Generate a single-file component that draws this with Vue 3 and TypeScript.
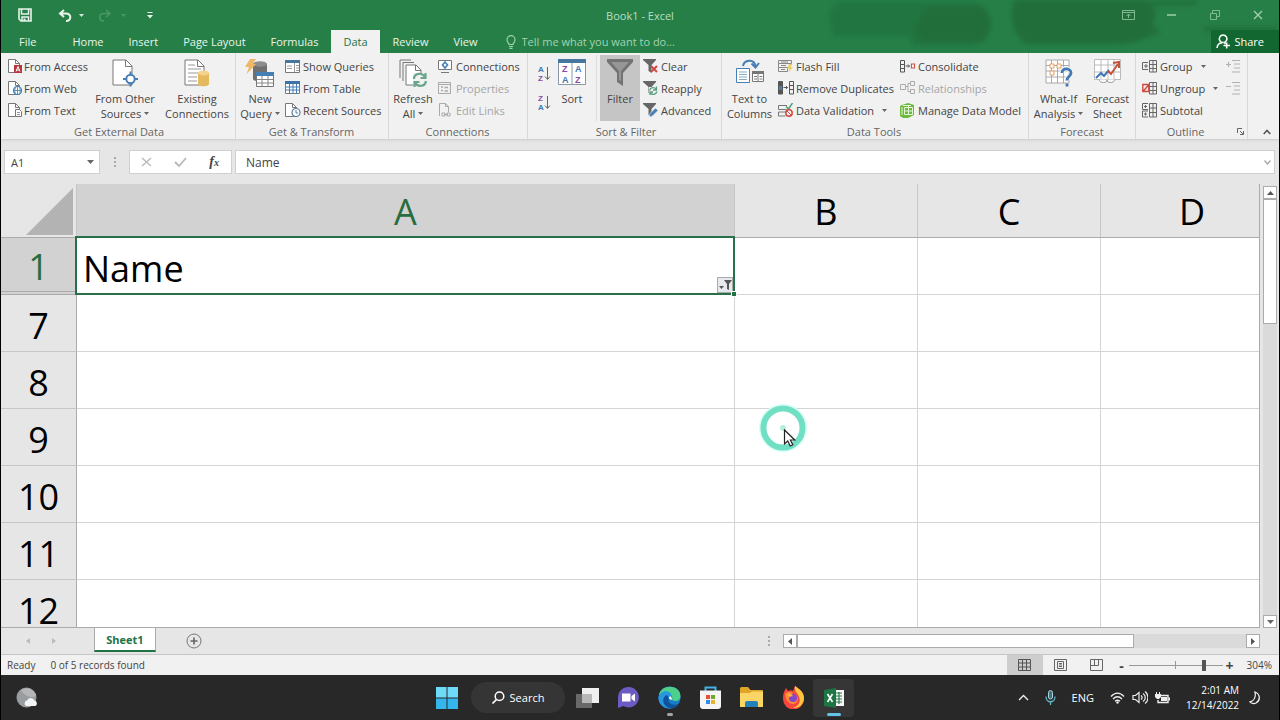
<script setup lang="ts">
import { h, ref } from 'vue'

interface Glyph { w: number; h: number; body: string }

const page = '<path d="M.5.5h7l4 4v9H.5z" fill="#fff" stroke="#777"/><path d="M7.500.5v4h4" fill="none" stroke="#777"/>'
const bigPage = '<path d="M1 1h13l6 6v19H1z" fill="#fff" stroke="#777"/><path d="M13.500 1v6.500H20" fill="none" stroke="#777"/>'
const funnel = '<path d="M0 0h13v1L8.500 6v8l-3-2V6L0 1z" fill="#666"/>'
const table = '<path d="M.5.5h14v12H.5z" fill="#fff" stroke="#777"/>'
const letter = (x: number, y: number, s: number, c: string, t: string) =>
  `<text x="${x}" y="${y}" font-size="${s}" font-weight="700" font-family="Liberation Sans, sans-serif" fill="${c}">${t}</text>`
const blue = '#3f76b5'
const purple = '#8a4ba8'

const glyphs: Record<string, Glyph> = {
  save: { w: 14, h: 14, body: '<path d="M1 1h12v12H3l-2-2z" fill="none" stroke="#e9f5ec" stroke-width="1.600"/><path d="M3.500 1v5h7V1M4 13V9h6.500v4" fill="none" stroke="#e9f5ec" stroke-width="1.500"/><path d="M5.500 10.500h2V13h-2z" fill="#e9f5ec"/>' },
  undo: { w: 14, h: 13, body: '<path d="M6 1 2 4.500 6 8M2.500 4.500H8c6 0 5.500 7.500 0 7.500" fill="none" stroke="#e9f5ec" stroke-width="2"/>' },
  redo: { w: 14, h: 13, body: '<path d="m8 1 4 3.500L8 8M11.500 4.500H6c-6 0-5.500 7.500 0 7.500" fill="none" stroke="#4a9965" stroke-width="1.600"/>' },
  caretLight: { w: 5, h: 3, body: '<path d="M0 0h5L2.500 3z" fill="#d3ead9"/>' },
  caretDim: { w: 5, h: 3, body: '<path d="M0 0h5L2.500 3z" fill="#4a9965"/>' },
  customize: { w: 6, h: 7, body: '<path d="M.5 0h5v1h-5zM0 3h6L3 6.500z" fill="#e9f5ec"/>' },
  ribbonMode: { w: 13, h: 10, body: '<path d="M.5.5h12v9H.5zM.5 2.500h12M6.500 8V4M4.500 6l2-2 2 2" fill="none" stroke="#7ebb90"/>' },
  minimize: { w: 9, h: 2, body: '<path d="M0 0h9v2H0z" fill="#7ebb90"/>' },
  restore: { w: 10, h: 10, body: '<path d="M.5 3.500h6v6h-6zM2.500 3V.500h7v6h-2.500" fill="none" stroke="#7ebb90"/>' },
  close: { w: 10, h: 10, body: '<path d="m1 1 8 8M9 1 1 9" fill="none" stroke="#a5d0b1" stroke-width="1.300"/>' },
  bulb: { w: 10, h: 14, body: '<path d="M3 9.500C3 8 1 7.500 1 4.700a4 4 0 0 1 8 0C9 7.500 7 8 7 9.500zM3 11.500h4M3.500 13.300h3" fill="none" stroke="#9fd2ae" stroke-width="1.200"/>' },
  person: { w: 14, h: 15, body: '<path d="M7 8.500a3.800 3.800 0 1 1 .2 0M1 14c.3-3 2.500-5 5-5.200M8.500 8.500l1 1.500M7.500 11.500H14M10.700 8.500v6" fill="none" stroke="#fff" stroke-width="1.500"/>' },
  access: { w: 14, h: 14, body: page + '<path d="M6 6h8v8H6z" fill="#b5363f"/><path d="m8 12.500 2-5 2 5M8.700 11h2.600" fill="none" stroke="#fff"/>' },
  web: { w: 14, h: 14, body: page + '<circle cx="9.500" cy="9.500" r="4" fill="#fff" stroke="#3c7fb5" stroke-width="1.200"/><path d="M5.500 9.500h8M9.500 5.500v8M7.500 6.500c-1 2-1 4 0 6M11.500 6.500c1 2 1 4 0 6" fill="none" stroke="#3c7fb5" stroke-width=".8"/>' },
  text: { w: 14, h: 14, body: page + '<path d="M7.500 6.500h4l2 2v5h-6z" fill="#fff" stroke="#777"/><path d="M9 9.500h3M9 11.500h3" stroke="#999"/>' },
  otherSources: { w: 26, h: 28, body: bigPage + '<circle cx="18.500" cy="20" r="4.200" fill="#fff" stroke="#477fb5" stroke-width="2"/><path d="M18.500 12.500v4M18.500 23.500v4M11 20h4M22 20h4" stroke="#477fb5" stroke-width="2"/>' },
  existing: { w: 26, h: 28, body: bigPage + '<path d="M4 6h7M4 10h13M4 14h11M4 18h9M4 22h9" stroke="#999"/><path d="M14 14v11c0 3 11 3 11 0V14z" fill="#e5b95e"/><ellipse cx="19.500" cy="14" rx="5.500" ry="2.500" fill="#f4d38c"/>' },
  newQuery: { w: 30, h: 30, body: '<path d="M8 5v15c0 3 14 3 14 0V5z" fill="#707070"/><ellipse cx="15" cy="5" rx="7" ry="2.800" fill="#8d8d8d"/><path d="M5 0h6L7.500 5H11L1.500 15 4 8H0z" fill="#efb765"/><path d="M11.500 13.500h17v14h-17z" fill="#fff" stroke="#777"/><path d="M11 13h18v4H11z" fill="#477fb5"/><path d="M17 17v10M23 17v10M12 20.500h16M12 24h16" stroke="#888"/>' },
  showQueries: { w: 15, h: 13, body: table + '<path d="M0 0h15v3H0z" fill="#47779f"/><path d="M9.500 3v9M2 6h5M2 8.500h5M11 5.500h3M11 8h3M11 10.500h3" stroke="#999"/>' },
  fromTable: { w: 15, h: 14, body: table + '<path d="M0 0h15v3H0z" fill="#3f73a8"/><path d="M4.500 3v10M8 3v10M11.500 3v10M1 6h13M1 9h13" stroke="#477fb5"/>' },
  recent: { w: 16, h: 14, body: page + '<circle cx="11" cy="9.500" r="4" fill="#fff" stroke="#567b9c" stroke-width="1.200"/><path d="M11 7v3h2" fill="none" stroke="#567b9c"/>' },
  refresh: { w: 28, h: 28, body: '<path d="M1 19V1h11" fill="none" stroke="#777"/><path d="M4 22V3.500h11" fill="none" stroke="#777"/><path d="M7 6h10l5 5v15H7z" fill="#fff" stroke="#777"/><path d="M16.500 6v5.500H22" fill="none" stroke="#777"/><path d="M14 14h14v14H14z" fill="#f1f1f1"/><path d="M15 20c0-6 8-7 11-2M26.500 14v5h-5M27 22c-1 6-8 6-11 2M15.500 28v-5h5" fill="none" stroke="#68a58a" stroke-width="2.200"/>' },
  connections: { w: 14, h: 13, body: '<path d="M.5.5h13v9H.5zM3 12.500h8" fill="#fff" stroke="#777"/><path d="m7 2 2.500 3L7 8 4.500 5z" fill="none" stroke="#477fb5" stroke-width="1.600"/>' },
  properties: { w: 13, h: 12, body: '<path d="M.5.5h12v11H.5zM.5 2.500h12" fill="none" stroke="#aaa"/><path d="M3 5h2M3 8.500h2M6.500 5.500H10M6.500 9H10" stroke="#aaa" stroke-width="1.500"/>' },
  links: { w: 13, h: 14, body: '<path d="M1.500 13V.500h6l3 3V9M7.500.5v3h3" fill="none" stroke="#aaa"/><path d="M4 10h3v3H4zM9 10h3v3H9zM6 11.500h4" fill="none" stroke="#aaa"/>' },
  sortAsc: { w: 15, h: 19, body: letter(1, 8, 8, blue, 'A') + letter(1, 17, 8, purple, 'Z') + '<path d="M10.500 3v12M8 12.500l2.500 3 2.500-3" fill="none" stroke="#666"/>' },
  sortDesc: { w: 15, h: 19, body: letter(1, 8, 8, purple, 'Z') + letter(1, 17, 8, blue, 'A') + '<path d="M10.500 3v12M8 12.500l2.500 3 2.500-3" fill="none" stroke="#666"/>' },
  sort: { w: 28, h: 27, body: '<path d="M.5.5h27v25H.5z" fill="#fff" stroke="#8a98a5"/><path d="M0 0h28v4H0z" fill="#47779f"/><path d="M14 4v21" stroke="#8a98a5"/>' + letter(4, 13, 9, purple, 'Z') + letter(4, 24, 9, blue, 'A') + letter(17, 13, 9, blue, 'A') + letter(17, 24, 9, purple, 'Z') },
  filter: { w: 26, h: 28, body: '<path d="M0 0h26v3L16 14v13l-6-4v-9L0 3z" fill="#737373"/><path d="M4 3h18l-8 9v10l-2-1v-9z" fill="#969696"/>' },
  clear: { w: 15, h: 14, body: funnel + '<path d="m8 7 6 6M14 7l-6 6" stroke="#cf4a42" stroke-width="2"/>' },
  reapply: { w: 15, h: 14, body: funnel + '<path d="M6 6h9v8H6z" fill="#f1f1f1"/><path d="M6.500 9.500c1-3.500 5-3.500 6.500-1.500M13.500 5.500V9H10M14 10.500c-1 3.500-5 3.500-6.500 1.500M7 14v-3h3" fill="none" stroke="#58a183" stroke-width="1.300"/>' },
  advanced: { w: 15, h: 14, body: funnel + '<path d="m6 14 1-3.500L12.500 5 15 7.500 9.500 13z" fill="#477fb5" stroke="#f1f1f1" stroke-width=".6"/>' },
  textCols: { w: 30, h: 26, body: '<path d="M1.500 9.500h13v14h-13z" fill="#fff" stroke="#477fb5"/><path d="M4 13h8M4 15.500h8M4 18h8M4 20.500h8" stroke="#8ba7be"/><path d="M17.500 12.500h11v10h-11z" fill="#fff" stroke="#777"/><path d="M17 12h12v3H17z" fill="#777"/><path d="M23 15v8M19 17.500h3M24.500 17.500h3M19 20h3M24.500 20h3" stroke="#777"/><path d="M8 7C9 1 19-1 20.500 7M16.500 4.500l4 4 3.500-4.500" fill="none" stroke="#477fb5" stroke-width="2"/>' },
  flash: { w: 15, h: 13, body: '<path d="M.5.5h13v3H.5zM.5 3.500h11v4H.5zM.5 7.500h9v4H.5zM3 2h7M3 5.500h5M3 9.500h4" fill="none" stroke="#888"/><path d="M11 4h3.500L12.500 7H15l-5 6 1.500-4H9z" fill="#e9cf6a"/>' },
  dupes: { w: 16, h: 14, body: '<path d="M.5.5h4v12.500h-4z" fill="#fff" stroke="#555"/><path d="M1 1h3v4H1zM1 9h3v4H1z" fill="#555"/><path d="M1 5h3v4H1z" fill="#477fb5"/><path d="M5.500 6.500h4M8 5l1.500 1.500L8 8M11.500.5h4v12.500h-4zM11.500 4.500h4M11.500 8.500h4" fill="none" stroke="#555"/>' },
  validation: { w: 15, h: 14, body: '<path d="M9 2.500H.5v4h8M8 9H.5v4h7" fill="none" stroke="#777"/><path d="m8 3.500 2.500 2.500 4-6" fill="none" stroke="#4d9d78" stroke-width="1.500"/><circle cx="11" cy="10" r="3.200" fill="none" stroke="#cf4a42" stroke-width="1.500"/><path d="m9 8 4 4" stroke="#cf4a42"/>' },
  consolidate: { w: 16, h: 13, body: '<path d="M.5.500h4v11.500h-4zM.5 4.500h4M.5 8.500h4M5.500 6h4M8 4.500 9.500 6 8 7.500" fill="none" stroke="#555"/><path d="M11.500 4h3v4h-3z" fill="#fff" stroke="#c3574d" stroke-width="1.200"/>' },
  relations: { w: 16, h: 14, body: '<path d="M.5 3.500h5v5h-5zM10.500.5h4v4h-4zM10.500 8.500h4v4h-4zM6 5.500h2V2.500h2M8 5.500v5h2" fill="none" stroke="#aaa"/>' },
  model: { w: 15, h: 15, body: '<path d="M2 2 8 0l6 2v10l-6 3H3L0 13V3z" fill="#6cb93c"/><path d="M4.500 4.500h8v7h-8zM8.500 2v9M4.500 8h8M2 4v8M3 2.500h8" fill="none" stroke="#e4f8d6"/>' },
  whatIf: { w: 28, h: 28, body: '<path d="M1 1h23v23H1zM1 6.500h23M1 12h23M1 18h23M6.500 1v23M12.500 1v23M18.500 1v23" fill="#fff" stroke="#aaa"/><path d="M5 5h4v4H5zM5 12h4v4H5zM12 5h4v4h-4z" fill="#fff" stroke="#e2a064"/><path d="M17 14c0-6 9-5 9 0 0 3.500-4 3-4 7.500" fill="none" stroke="#f1f1f1" stroke-width="5"/><path d="M17 14c0-6 9-5 9 0 0 3.500-4 3-4 7.500M22 24.500v3" fill="none" stroke="#4379b3" stroke-width="2.800"/>' },
  forecast: { w: 27, h: 26, body: '<path d="M.5.5h26v20H.5zM.5 6h26M.5 13h26M7 1v19M14 1v19M20 1v19" fill="#fff" stroke="#bbb"/><path d="m2 19 5-5 3 3 5-6" fill="none" stroke="#3f76b5" stroke-width="2"/><path d="m14 12 3 3 7-10M19 4l6-1v6" fill="none" stroke="#c5533c" stroke-width="2"/><path d="M5 20.500c1 4 8 4 9 0M12 20.500c1 4 8 4 9 0" fill="#fff" stroke="#999"/>' },
  group: { w: 15, h: 13, body: '<path d="M6 2.500H.5v7H6M4 4v4M2 6h4M7.500.5h7v11.500h-7zM7.500 4.500h7M7.500 8.500h7M11 .500v11.500" fill="none" stroke="#666"/>' },
  ungroup: { w: 15, h: 13, body: '<path d="M7.500.5h7v11.500h-7zM7.500 4.500h7M7.500 8.500h7M11 .500v11.500" fill="none" stroke="#666"/><path d="M.8 2.500h6v7h-6zM1 9.500l6-7" fill="none" stroke="#cf4a42" stroke-width="1.400"/>' },
  subtotal: { w: 15, h: 15, body: '<path d="M6 .5H.5v6H6M6 8H.5v6H6M2 3.500h3M3.500 2v3M2 11h3M3.500 9.500v3M7.500.5h7v13.500h-7zM7.500 5h7M7.500 9.500h7M11 .500V14" fill="none" stroke="#666"/>' },
  showDetail: { w: 14, h: 13, body: '<path d="M0 4.500h5M2.500 2v5M6 .5h8M8 4h6M8 8h6M6 12h8" fill="none" stroke="#b2b2b2" stroke-width="1.200"/>' },
  hideDetail: { w: 14, h: 13, body: '<path d="M0 4.500h5M6 .5h8M8 4h6M8 8h6M6 12h8" fill="none" stroke="#b2b2b2" stroke-width="1.200"/>' },
  caret: { w: 5, h: 3, body: '<path d="M0 0h5L2.500 3z" fill="#666"/>' },
  launcher: { w: 7, h: 7, body: '<path d="M.5 5V.500H5M3 3l3 3M6.500 3v3.500H3" fill="none" stroke="#666"/>' },
  collapse: { w: 8, h: 6, body: '<path d="m.7 5 3.300-3.500L7.300 5" fill="none" stroke="#555" stroke-width="1.600"/>' },
  expand: { w: 7, h: 5, body: '<path d="M.5.500 3.500 4l3-3.500" fill="none" stroke="#aaa" stroke-width="1.400"/>' },
  cancel: { w: 11, h: 10, body: '<path d="m1 1 9 8M10 1 1 9" stroke="#b9b9b9" stroke-width="1.400"/>' },
  accept: { w: 13, h: 10, body: '<path d="m1 5 4 4 7-8" fill="none" stroke="#b9b9b9" stroke-width="1.800"/>' },
  cellFilter: { w: 13, h: 10, body: '<path d="M0 6h5L2.500 9zM5 0h8L10 4v6L8 9V4z" fill="#555"/>' },
  up: { w: 7, h: 4, body: '<path d="M0 4h7L3.500 0z" fill="#555"/>' },
  down: { w: 7, h: 4, body: '<path d="M0 0h7L3.500 4z" fill="#666"/>' },
  left: { w: 4, h: 7, body: '<path d="M4 0v7L0 3.500z" fill="#555"/>' },
  right: { w: 4, h: 7, body: '<path d="M0 0v7l4-3.500z" fill="#555"/>' },
  prevSheet: { w: 4, h: 6, body: '<path d="M4 0v6L0 3z" fill="#bbb"/>' },
  nextSheet: { w: 4, h: 6, body: '<path d="M0 0v6l4-3z" fill="#bbb"/>' },
  addSheet: { w: 16, h: 16, body: '<circle cx="8" cy="8" r="7" fill="none" stroke="#777"/><path d="M8 4.500v7M4.500 8h7" stroke="#666" stroke-width="1.600"/>' },
  normalView: { w: 13, h: 12, body: '<path d="M.5.5h12v11H.500zM.5 4h12M.5 8h12M4.500.5v11M8.500.5v11" fill="none" stroke="#555"/>' },
  layoutView: { w: 13, h: 12, body: '<path d="M.5.5h12v11H.500zM3.500 2.500h6v7h-6zM5 4.500h3M5 6h3M5 7.500h3" fill="none" stroke="#666"/>' },
  breakView: { w: 13, h: 12, body: '<path d="M.5.5h12v11H.500zM4.500.5v6M8.500.5v6M.500 6.500h8" fill="none" stroke="#666"/>' },
  weather: { w: 23, h: 22, body: '<circle cx="10.500" cy="10.500" r="10" fill="#9a9d9f"/><path d="M5 3a10 10 0 0 1 11 0 9 9 0 0 1 4 6C15 11 9 10 5 3z" fill="#b4b6b7"/><path d="M10 19a3 3 0 0 1 1-5.500 4 4 0 0 1 7.500 0 3 3 0 0 1 1 5.500z" fill="#f1f3f4"/>' },
  windows: { w: 22, h: 22, body: '<path d="M0 0h10.500v10.500H0zM11.500 0H22v10.500H11.500z" fill="#6edaf8"/><path d="M0 11.500h10.500V22H0zM11.500 11.500H22V22H11.500z" fill="#35b5ee"/>' },
  search: { w: 13, h: 13, body: '<circle cx="7.500" cy="5.300" r="4.300" fill="none" stroke="#fff" stroke-width="1.500"/><path d="m4.500 8.500-4 4" stroke="#fff" stroke-width="1.700"/>' },
  taskView: { w: 23, h: 20, body: '<path d="M0 6h16v14H0z" fill="#696969"/><path d="M6 0h17v15H6z" fill="#f0f0f0"/><path d="M6 6h10v9H6z" fill="#b8b8b8"/>' },
  chat: { w: 21, h: 21, body: '<path d="M10.500 0a10.200 10.200 0 1 1-5 19L0 21V10A10.200 10.200 0 0 1 10.500 0z" fill="#6d5bc4"/><path d="M4 6.500h8.500v8H4zM13.500 9l3.500-2.500v8L13.500 12z" fill="#fff"/>' },
  edge: { w: 23, h: 23, body: '<circle cx="11.500" cy="11.500" r="11" fill="#187ec8"/><path d="M1 9C3-2 22-2 22.500 10c0 5-5 6-8.500 4 2-5-6-9-13-5z" fill="#4ed08c"/><path d="M.500 11C4 2 14 5 13.500 10c-3-1-6 4-2 8 3 3 7 2 9 0C14 26 0 23 .5 11z" fill="#2698df"/><path d="M9 9c-6 2-5 12 4 13.500 3 0 6-2 7.500-4.500C14 20 9 17 11 12z" fill="#10529b"/><path d="M11 11c2-2 3 1 3 3-2-1-4-1-3-3z" fill="#e8f7fd"/>' },
  store: { w: 21, h: 23, body: '<path d="M5.500 6V1.500h10V6" fill="none" stroke="#43b2e6" stroke-width="2"/><path d="M0 4.500h21V20a3 3 0 0 1-3 3H3a3 3 0 0 1-3-3z" fill="#f5f5f5"/><path d="M6 9h4v4H6z" fill="#e75235"/><path d="M11 9h4v4h-4z" fill="#71a92f"/><path d="M6 14h4v4H6z" fill="#2f8fe0"/><path d="M11 14h4v4h-4z" fill="#eeb02f"/>' },
  explorer: { w: 23, h: 21, body: '<path d="M0 1.500A1.500 1.500 0 0 1 1.500 0H8l2.500 3H22a1 1 0 0 1 1 1v16H0z" fill="#dea526"/><path d="M0 6h10l2-1.500h11V20H0z" fill="#fbd667"/><path d="M5 20v-4a2 2 0 0 1 2-2h9a2 2 0 0 1 2 2v4z" fill="#2382b9"/>' },
  firefox: { w: 22, h: 23, body: '<path d="M2 6 4 2l2 3c2-1 4-1 5 0l2-5c6 4 9 7 9 13a10.500 10.500 0 0 1-21 0c0-3 .3-5 1-7z" fill="#f5473f"/><path d="M13 0c6 4 9 7 9 13-1 7-6 9-11 9 6-2 8-7 6-11-1-4-5-5-4-11z" fill="#ffc53d"/><path d="M3 8c3-3 6-2 8-1l-2 2c6-1 9 4 5 8-5 3-10-1-11-9z" fill="#fb8b34"/><circle cx="11" cy="12" r="4" fill="#8446ca"/><path d="M5 8c4-1 5 1 6 2l-4 1z" fill="#ffb13c"/>' },
  excel: { w: 20, h: 20, body: '<path d="M10 2h10v16H10z" fill="#f6f6f6"/><path d="M12 5h6M12 8h6M12 11h6M12 14h6M15 4v12" stroke="#287c47" stroke-width="1.200"/><path d="M0 2 12 0v20L0 18z" fill="#1e7544"/><path d="m3.500 6 5 8M8.500 6l-5 8" stroke="#fff" stroke-width="1.600"/>' },
  tray: { w: 11, h: 7, body: '<path d="m1 6 4.500-4.500L10 6" fill="none" stroke="#eee" stroke-width="1.400"/>' },
  mic: { w: 11, h: 15, body: '<rect x="3.500" y=".6" width="4" height="8.400" rx="2" fill="#4a6c75" stroke="#a9d6df"/><path d="M1 6.500c0 7 9 7 9 0M5.500 12v3" fill="none" stroke="#62b7c7" stroke-width="1.300"/>' },
  wifi: { w: 15, h: 12, body: '<path d="M1 4.500c4-4.500 9-4.500 13 0M3 7c3-3 6-3 9 0M5 9.300c2-1.700 3-1.700 5 0" fill="none" stroke="#eee" stroke-width="1.300"/><circle cx="7.500" cy="10.500" r="1.200" fill="#eee"/>' },
  volume: { w: 16, h: 13, body: '<path d="M1 4.500h2.500L7 1.500v10l-3.500-3H1zM9 4.500c1.500 1 1.500 3 0 4M11 2.500c3 2 3 6 0 8M13 .500c4 3 4 9 0 12" fill="none" stroke="#eee" stroke-width="1.200"/>' },
  battery: { w: 15, h: 12, body: '<path d="M5 3.500h8v7H3V8M14.500 5.500v3" fill="none" stroke="#eee" stroke-width="1.400"/><path d="M6 5h6v4H6zM0 2h6v3L4 7H2L0 5zM1 0h1v3H1zM4 0h1v3H4z" fill="#eee"/>' },
  moon: { w: 12, h: 14, body: '<path d="M6 1c5 2 6 8 1 11-2 1-5 .5-6-1 4-1 6-5 5-10z" fill="none" stroke="#eee" stroke-width="1.300"/>' },
}

const Icon = (props: { name: string }) => {
  const g = glyphs[props.name]
  return h('svg', { class: 'icon', width: g.w, height: g.h, viewBox: `0 0 ${g.w} ${g.h}`, 'aria-hidden': 'true', innerHTML: g.body })
}
Icon.props = ['name']

interface Small { icon: string; label: string; off?: boolean; menu?: boolean }
const external: Small[] = [{ icon: 'access', label: 'From Access' }, { icon: 'web', label: 'From Web' }, { icon: 'text', label: 'From Text' }]
const transform: Small[] = [{ icon: 'showQueries', label: 'Show Queries' }, { icon: 'fromTable', label: 'From Table' }, { icon: 'recent', label: 'Recent Sources' }]
const connections: Small[] = [{ icon: 'connections', label: 'Connections' }, { icon: 'properties', label: 'Properties', off: true }, { icon: 'links', label: 'Edit Links', off: true }]
const filters: Small[] = [{ icon: 'clear', label: 'Clear' }, { icon: 'reapply', label: 'Reapply' }, { icon: 'advanced', label: 'Advanced' }]
const toolsA: Small[] = [{ icon: 'flash', label: 'Flash Fill' }, { icon: 'dupes', label: 'Remove Duplicates' }, { icon: 'validation', label: 'Data Validation', menu: true }]
const toolsB: Small[] = [{ icon: 'consolidate', label: 'Consolidate' }, { icon: 'relations', label: 'Relationships', off: true }, { icon: 'model', label: 'Manage Data Model' }]
const outline: Small[] = [{ icon: 'group', label: 'Group', menu: true }, { icon: 'ungroup', label: 'Ungroup', menu: true }, { icon: 'subtotal', label: 'Subtotal' }]

const SmallList = (props: { items: Small[] }) =>
  h('div', { class: 'small-list' }, props.items.map((s) =>
    h('button', { class: 'small', type: 'button', disabled: s.off }, [
      h('span', { class: 'small-icon' }, [h(Icon, { name: s.icon })]),
      s.label,
      s.menu ? h('span', { class: 'small-caret' }, [h(Icon, { name: 'caret' })]) : null,
    ])))
SmallList.props = ['items']

const tabs = ['Home', 'Insert', 'Page Layout', 'Formulas', 'Data', 'Review', 'View']
const columns = ['A', 'B', 'C', 'D']
const rows = [1, 7, 8, 9, 10, 11, 12]
const apps = [
  { icon: 'taskView', label: 'Task view' }, { icon: 'chat', label: 'Chat' }, { icon: 'edge', label: 'Edge', running: true },
  { icon: 'store', label: 'Store' }, { icon: 'explorer', label: 'File Explorer' }, { icon: 'firefox', label: 'Firefox' },
  { icon: 'excel', label: 'Excel', active: true },
]
const cellRef = ref('A1')
const formula = ref('Name')
const ask = ref('')
const zoom = ref(304)
</script>

<template>
  <div class="app">
    <header class="top">
      <svg class="blotches" width="460" height="52" viewBox="0 0 460 52" aria-hidden="true">
        <defs><filter id="soften"><feGaussianBlur stdDeviation="2" /></filter></defs>
        <g filter="url(#soften)" fill="#206e3b">
          <path d="M18 2h140l10 8v30l-15 6H95L90 36H15L10 14z" opacity=".6" />
          <path d="M108 6h50q14 4 14 18t-14 18h-55l-8-12z" />
          <path d="M195 0h130q18 8 8 24l8 8-14 6q-10 6-30 6h-90q-20-16-12-44z" />
          <path d="M330 0h50l-6 6h-44zM385 26h74v6h-74z" opacity=".8" />
        </g>
      </svg>
      <div class="title-bar">
        <div class="quick">
          <button type="button" aria-label="Save"><Icon name="save" /></button>
          <button class="undo" type="button" aria-label="Undo"><Icon name="undo" /><Icon name="caretLight" /></button>
          <button class="redo" type="button" aria-label="Redo"><Icon name="redo" /><Icon name="caretDim" /></button>
          <button class="custom" type="button" aria-label="Customize toolbar"><Icon name="customize" /></button>
        </div>
        <span class="doc">Book1 - Excel</span>
        <div class="window-buttons">
          <button v-for="n in ['ribbonMode', 'minimize', 'restore', 'close']" :key="n" type="button" :aria-label="n"><Icon :name="n" /></button>
        </div>
      </div>
      <nav class="tabs">
        <button class="file" type="button">File</button>
        <button v-for="t in tabs" :key="t" type="button" :class="{ current: t === 'Data' }">{{ t }}</button>
        <label class="tell"><Icon name="bulb" /><input v-model="ask" type="text" placeholder="Tell me what you want to do..." aria-label="Tell me what you want to do"></label>
        <button class="share" type="button"><Icon name="person" />Share</button>
      </nav>
    </header>

    <div class="ribbon">
      <section class="group g-ext">
        <div class="tools">
          <SmallList class="c-ext" :items="external" />
          <button class="big w70" type="button"><span class="pic"><Icon name="otherSources" /></span><span>From Other</span><span class="line">Sources<Icon name="caret" /></span></button>
          <button class="big w70" type="button"><span class="pic"><Icon name="existing" /></span><span>Existing</span><span>Connections</span></button>
        </div>
        <h2>Get External Data</h2>
      </section>
      <section class="group g-trans">
        <div class="tools">
          <button class="big w40" type="button"><span class="pic"><Icon name="newQuery" /></span><span>New</span><span class="line">Query<Icon name="caret" /></span></button>
          <SmallList class="c-trans" :items="transform" />
        </div>
        <h2>Get &amp; Transform</h2>
      </section>
      <section class="group g-conn">
        <div class="tools">
          <button class="big w40" type="button"><span class="pic"><Icon name="refresh" /></span><span>Refresh</span><span class="line">All<Icon name="caret" /></span></button>
          <SmallList class="c-conn" :items="connections" />
        </div>
        <h2>Connections</h2>
      </section>
      <section class="group g-sort">
        <div class="tools">
          <div class="orders">
            <button type="button" aria-label="Sort A to Z"><Icon name="sortAsc" /></button>
            <button type="button" aria-label="Sort Z to A"><Icon name="sortDesc" /></button>
          </div>
          <button class="big w40" type="button"><span class="pic"><Icon name="sort" /></span><span>Sort</span></button>
          <span class="divider" />
          <button class="big w40 pressed" type="button" aria-pressed="true"><span class="pic"><Icon name="filter" /></span><span>Filter</span></button>
          <SmallList class="c-filter" :items="filters" />
        </div>
        <h2>Sort &amp; Filter</h2>
      </section>
      <section class="group g-tools">
        <div class="tools">
          <button class="big w48" type="button"><span class="pic"><Icon name="textCols" /></span><span>Text to</span><span>Columns</span></button>
          <SmallList class="c-tools" :items="toolsA" />
          <SmallList :items="toolsB" />
        </div>
        <h2>Data Tools</h2>
      </section>
      <section class="group g-fore">
        <div class="tools">
          <button class="big w48" type="button"><span class="pic"><Icon name="whatIf" /></span><span>What-If</span><span class="line">Analysis<Icon name="caret" /></span></button>
          <button class="big w48" type="button"><span class="pic"><Icon name="forecast" /></span><span>Forecast</span><span>Sheet</span></button>
        </div>
        <h2>Forecast</h2>
      </section>
      <section class="group g-out">
        <div class="tools">
          <SmallList :items="outline" />
          <div class="details">
            <button type="button" aria-label="Show detail"><Icon name="showDetail" /></button>
            <button type="button" aria-label="Hide detail"><Icon name="hideDetail" /></button>
          </div>
        </div>
        <div class="caption"><h2>Outline</h2><button type="button" aria-label="Outline settings"><Icon name="launcher" /></button></div>
      </section>
      <div class="fold"><button type="button" aria-label="Collapse the ribbon"><Icon name="collapse" /></button></div>
    </div>

    <div class="formula-row">
      <div class="name-box"><input v-model="cellRef" type="text" aria-label="Name box"><button type="button" aria-label="Names"><Icon name="down" /></button></div>
      <span class="grip" aria-hidden="true"><i /><i /><i /></span>
      <div class="fx-box">
        <button type="button" aria-label="Cancel"><Icon name="cancel" /></button>
        <button type="button" aria-label="Enter"><Icon name="accept" /></button>
        <button class="fx" type="button" aria-label="Insert function">f<sub>x</sub></button>
      </div>
      <div class="formula"><input v-model="formula" type="text" aria-label="Formula bar"><button type="button" aria-label="Expand"><Icon name="expand" /></button></div>
    </div>

    <main class="sheet">
      <div class="viewport">
        <table>
          <colgroup><col class="col-head"><col class="col-a"><col class="col-b"><col class="col-b"><col></colgroup>
          <thead>
            <tr>
              <th class="corner"><svg width="47" height="47" viewBox="0 0 47 47" aria-hidden="true"><path d="M47 0v47H0z" fill="#b3b3b3" /></svg></th>
              <th v-for="c in columns" :key="c" scope="col" :class="{ picked: c === 'A' }">{{ c }}</th>
            </tr>
          </thead>
          <tbody>
            <tr v-for="r in rows" :key="r">
              <th scope="row" :class="{ picked: r === 1 }">{{ r }}</th>
              <td v-for="c in columns" :key="c" :class="{ chosen: r === 1 && c === 'A' }">
                <template v-if="r === 1 && c === 'A'">Name<button class="cell-filter" type="button" aria-label="Filter Name"><Icon name="cellFilter" /></button><span class="outline-box" /><span class="handle" /></template>
              </td>
            </tr>
          </tbody>
        </table>
      </div>
      <div class="v-scroll">
        <button type="button" aria-label="Scroll up"><Icon name="up" /></button>
        <div class="v-track"><div class="v-thumb" /></div>
        <button type="button" aria-label="Scroll down"><Icon name="down" /></button>
      </div>
      <svg class="pointer" width="54" height="54" viewBox="0 0 54 54" aria-hidden="true">
        <circle cx="27" cy="27" r="22" fill="none" stroke="#d5fff3" stroke-width="4" />
        <circle cx="27" cy="27" r="19.500" fill="none" stroke="#71dfc3" stroke-width="6" />
        <circle cx="27" cy="27" r="3" fill="#b5f0df" />
        <path d="M28.500 29v14l3.300-3 2.400 5 2.600-1.200-2.400-4.800h4.400z" fill="#fff" stroke="#222" stroke-width="1.200" />
      </svg>
    </main>

    <div class="sheet-bar">
      <button class="prev" type="button" aria-label="Previous sheet"><Icon name="prevSheet" /></button>
      <button class="next" type="button" aria-label="Next sheet"><Icon name="nextSheet" /></button>
      <button class="sheet-tab" type="button">Sheet1</button>
      <button class="add" type="button" aria-label="New sheet"><Icon name="addSheet" /></button>
      <span class="grip split" aria-hidden="true"><i /><i /><i /></span>
      <div class="h-scroll">
        <button type="button" aria-label="Scroll left"><Icon name="left" /></button>
        <div class="h-track"><div class="h-thumb" /></div>
        <button type="button" aria-label="Scroll right"><Icon name="right" /></button>
      </div>
    </div>

    <div class="status">
      <span>Ready</span><span class="found">0 of 5 records found</span>
      <div class="views">
        <button class="on" type="button" aria-label="Normal"><Icon name="normalView" /></button>
        <button type="button" aria-label="Page layout"><Icon name="layoutView" /></button>
        <button type="button" aria-label="Page break preview"><Icon name="breakView" /></button>
      </div>
      <button class="step" type="button" aria-label="Zoom out">-</button>
      <input v-model.number="zoom" class="zoom" type="range" min="10" max="370" aria-label="Zoom">
      <button class="step" type="button" aria-label="Zoom in">+</button>
      <output>{{ zoom }}%</output>
    </div>

    <footer class="taskbar">
      <button class="weather" type="button" aria-label="Weather"><Icon name="weather" /></button>
      <div class="apps">
        <button class="app-button" type="button" aria-label="Start"><Icon name="windows" /></button>
        <button class="search" type="button"><Icon name="search" />Search</button>
        <button v-for="a in apps" :key="a.icon" class="app-button" :class="{ running: a.running, active: a.active }" type="button" :aria-label="a.label"><Icon :name="a.icon" /></button>
      </div>
      <div class="tray">
        <button type="button" aria-label="Hidden icons"><Icon name="tray" /></button>
        <button type="button" aria-label="Microphone"><Icon name="mic" /></button>
        <button class="lang" type="button">ENG</button>
        <button class="net" type="button" aria-label="Network, volume and battery"><Icon name="wifi" /><Icon name="volume" /><Icon name="battery" /></button>
        <time><span>2:01 AM</span><span>12/14/2022</span></time>
        <button type="button" aria-label="Focus"><Icon name="moon" /></button>
      </div>
    </footer>
  </div>
</template>

<style>
body { margin: 0; background: #262626; }
</style>

<style scoped>
.app { box-sizing: border-box; display: flex; flex-direction: column; height: 100vh; border: solid #000; border-width: 0 1px; overflow: hidden; background: #e6e6e6; color: #444; font: 11px/15px "Open Sans", "Noto Sans", sans-serif; }
.app :deep(*) { box-sizing: border-box; }
.app :deep(.icon) { display: block; flex: none; }
.app :deep(button) { display: flex; align-items: center; justify-content: center; margin: 0; padding: 0; border: 0; background: none; color: inherit; font: inherit; white-space: nowrap; }
.app input[type="text"] { min-width: 0; padding: 0; border: 0; outline: 0; background: none; color: inherit; font: inherit; }

.top { position: relative; flex: none; background: #267f47; color: #e9f5ec; }
.blotches { position: absolute; top: 0; right: 0; }
.title-bar { position: relative; display: grid; grid-template-columns: 1fr auto 1fr; align-items: center; height: 30px; }
.quick { display: flex; align-items: center; padding-left: 17px; }
.quick .undo { gap: 7px; margin-left: 26px; }
.quick .redo { gap: 9px; margin-left: 14px; }
.quick .custom { margin-left: 21px; }
.doc { color: #b9dfc3; }
.window-buttons { display: flex; justify-content: flex-end; }
.window-buttons button { width: 43px; height: 28px; }
.tabs { position: relative; display: flex; gap: 1px; height: 23px; }
.tabs button { padding: 0 12px; }
.tabs .file { margin-right: 11px; padding-left: 18px; }
.tabs .current { background: #f1f1f1; color: #217346; }
.tell { display: flex; flex: 1; align-items: center; gap: 6px; padding-left: 15px; color: #a3d3b1; }
.tell input { flex: 1; }
.tell input::placeholder { color: #a3d3b1; opacity: 1; }
.tabs .share { gap: 4px; padding: 0 15px 0 5px; background: #126630; color: #fff; }

.ribbon { display: grid; flex: none; grid-template-columns: 235fr 153fr 139fr 194fr 307fr 107fr 112fr 31fr; height: 87px; border-bottom: 1px solid #d2d2d2; background: #f1f1f1; box-shadow: 0 1px 2px #d9d9d9; }
.group { min-width: 0; padding-top: 2px; border-right: 1px solid #d8d8d8; }
.tools { display: flex; height: 69px; }
h2 { margin: 0; padding-right: 5px; color: #666; font: inherit; line-height: 15px; text-align: center; }
.app :deep(.small-list) { display: flex; flex: none; flex-direction: column; }
.app :deep(.small) { justify-content: flex-start; height: 22px; }
.app :deep(.small:disabled) { color: #a5a5a5; }
.app :deep(.small-icon) { display: flex; flex: none; width: 18px; }
.app :deep(.small-caret) { margin-left: 8px; }
.app .big { flex: none; flex-direction: column; justify-content: flex-start; height: 66px; padding-top: 4px; }
.pic { display: flex; align-items: flex-start; height: 32px; }
.line { display: flex; align-items: center; gap: 3px; }
.w70 { width: 72px; }
.w40 { width: 40px; }
.w48 { width: 49px; }
.g-ext { padding-left: 7px; }
.g-ext :deep(.small-icon) { width: 16px; }
.c-ext { width: 81px; }
.g-trans { padding-left: 4px; }
.c-trans { margin-left: 5px; }
.g-conn { padding-left: 4px; }
.c-conn { margin-left: 5px; }
.g-sort { padding-left: 8px; }
.orders { display: flex; flex-direction: column; gap: 10px; width: 16px; padding-top: 9px; }
.divider { width: 1px; height: 66px; margin: 0 3px 0 4px; background: #dedede; }
.app .pressed { background: #c5c5c5; }
.c-filter { margin-left: 3px; }
.g-tools { padding-left: 3px; }
.c-tools { width: 122px; margin-left: 4px; }
.g-fore { padding-left: 5px; }
.g-out { padding-left: 6px; }
.g-out .tools { justify-content: space-between; padding-right: 7px; }
.app .details button { height: 22px; }
.caption { display: flex; align-items: center; padding-right: 3px; }
.caption h2 { flex: 1; padding-right: 8px; }
.fold { display: flex; align-items: flex-end; justify-content: center; padding: 0 0 4px 7px; }

.formula-row { display: flex; flex: none; align-items: stretch; height: 44px; padding: 10px 4px 10px 3px; font-size: 12px; }
.name-box, .fx-box, .formula { display: flex; align-items: center; border: 1px solid #d0d0d0; background: #fff; }
.name-box { width: 96px; padding: 0 5px 0 6px; font-size: 11px; }
.name-box input, .formula input { flex: 1; }
.grip { display: flex; flex-direction: column; justify-content: center; gap: 2px; width: 29px; align-items: center; }
.grip i { width: 2px; height: 2px; background: #aaa; }
.fx-box { width: 103px; margin-right: 3px; }
.fx-box button { flex: 1; }
.app .fx { font: italic 700 14px "Liberation Serif", serif; }
.fx sub { font-size: 10px; }
.formula { flex: 1; padding: 0 3px 0 10px; }

.sheet { position: relative; display: flex; flex: 1; min-height: 0; }
.viewport { flex: 1; min-width: 0; overflow: hidden; border-right: 1px solid #ababab; border-bottom: 1px solid #ababab; background: #fff; }
table { width: 100%; min-width: 1283px; border-spacing: 0; table-layout: fixed; color: #000; font-size: 36px; line-height: 48px; }
.col-head { width: 76px; }
.col-a { width: 658px; }
.col-b { width: 183px; }
th { padding: 2px 0 0; border: solid #c6c6c6; border-width: 0 1px 1px 0; background: #e6e6e6; font-weight: 400; text-align: center; }
thead th { height: 54px; border-bottom-color: #ababab; }
tbody th { height: 57px; padding-top: 5px; border-right-color: #ababab; }
tbody tr:first-child th { border-bottom: 4px double #ababab; }
.picked { background: #d2d2d2; color: #286c40; }
.corner svg { display: block; margin: 0 3px 0 auto; }
td { padding: 5px 6px 0; border: solid #d4d4d4; border-width: 0 1px 1px 0; }
.chosen { position: relative; }
.outline-box { position: absolute; inset: -2px -1px -1px -2px; border: 2px solid #287148; pointer-events: none; }
.handle { position: absolute; right: -3px; bottom: -3px; width: 6px; height: 6px; border: 1px solid #fff; background: #217346; }
.app .cell-filter { position: absolute; right: 1px; bottom: 1px; width: 16px; height: 16px; border: 1px solid #aaa; background: #e6e9ed; }
.v-scroll { display: flex; flex-direction: column; width: 19px; padding: 2px 2px 0 3px; }
.app .v-scroll button { flex: none; height: 13px; border: 1px solid #ababab; background: #fff; }
.v-track { flex: 1; background: #dadada; }
.v-thumb { height: 30%; border: 1px solid #ababab; background: #fff; }
.pointer { position: absolute; left: 755px; top: 217px; }

.sheet-bar { display: flex; flex: none; align-items: center; height: 27px; border-bottom: 1px solid #c6c6c6; }
.prev { width: 53px; }
.app .next { margin: 0 38px 0 -2px; }
.app .sheet-tab { align-self: flex-start; width: 62px; height: 24px; border: solid #ababab; border-width: 0 1px; border-bottom: 2px solid #217346; background: #fff; color: #217346; font-weight: 700; }
.app .add { margin-left: 30px; }
.split { margin-left: auto; }
.h-scroll { display: flex; width: 37.3%; height: 14px; margin-right: 19px; }
.app .h-scroll button { width: 14px; border: 1px solid #ababab; background: #fff; }
.h-track { flex: 1; background: #dadada; }
.h-thumb { width: 75%; height: 100%; border: 1px solid #ababab; background: #fff; }

.status { display: flex; flex: none; align-items: center; height: 20px; padding: 0 7px 0 6px; background: #f1f1f1; font-size: 10px; }
.found { margin-left: 15px; }
.views { display: flex; align-self: stretch; margin-left: auto; }
.views button { width: 36px; }
.app .views .on { background: #cdcdcd; }
.app .step { width: 14px; color: #444; font-size: 14px; font-weight: 700; }
.zoom { width: 94px; height: 14px; margin: 0; appearance: none; background: linear-gradient(#999, #999) center / 100% 1px no-repeat, linear-gradient(#999, #999) center / 1px 8px no-repeat; }
.zoom::-webkit-slider-thumb { width: 4px; height: 11px; appearance: none; background: #555; }
output { margin-left: 10px; }

.taskbar { display: grid; flex: none; grid-template-columns: 1fr auto 1fr; align-items: center; height: 45px; background: #282828; color: #fff; }
.app .weather { justify-self: start; margin-left: 15px; }
.apps { display: flex; align-items: center; }
.app-button { position: relative; width: 41px; height: 38px; }
.app .search { gap: 5px; width: 94px; height: 31px; margin: 0 2px 0 4px; border-radius: 16px; background: #353535; }
.app .active.app-button { border-radius: 4px; background: #363636; }
.running::after, .app-button.active::after { position: absolute; bottom: 1px; width: 6px; height: 3px; border-radius: 2px; background: #a5a5a5; content: ""; }
.app-button.active::after { width: 14px; background: #62c4e8; }
.tray { display: flex; align-items: center; justify-content: flex-end; gap: 16px; padding-right: 18px; }
.app .net { gap: 7px; }
time { display: flex; flex-direction: column; width: 53px; margin-right: -6px; font-size: 10px; text-align: right; }
</style>
